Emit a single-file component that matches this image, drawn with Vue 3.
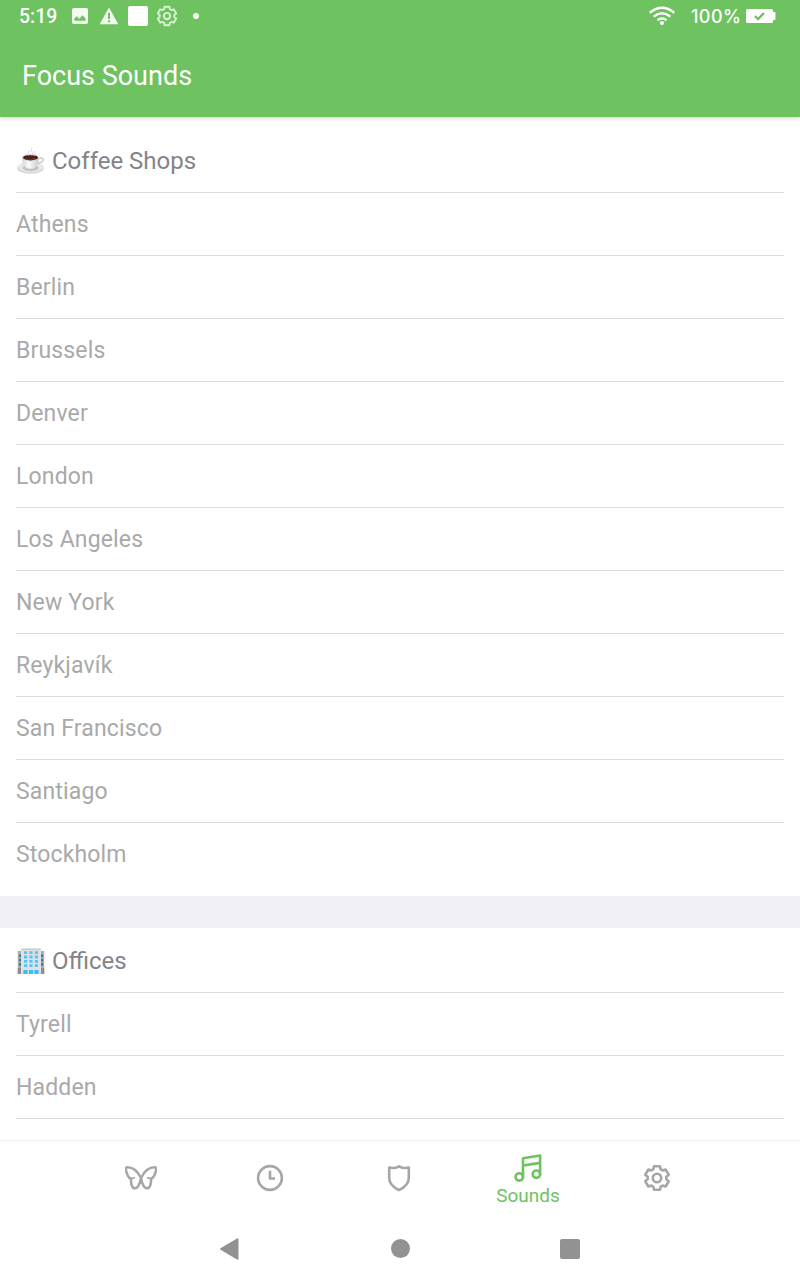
<script setup>
// 咖啡店列表
const coffeeShops = [
  'Athens',
  'Berlin',
  'Brussels',
  'Denver',
  'London',
  'Los Angeles',
  'New York',
  'Reykjavík',
  'San Francisco',
  'Santiago',
  'Stockholm',
]

// 办公室列表
const offices = ['Tyrell', 'Hadden']

// 齿轮轮廓, 状态栏和底部导航共用
const gear = 'M13 4.200H19L19.600 7.200Q20.600 7.500 21.600 8.500L24.600 7.500 27.700 12.700 25.300 14.800V17.200L27.700 19.300 24.600 24.500 21.600 23.500Q20.600 24.500 19.600 24.800L19 27.800H13L12.400 24.800Q11.400 24.500 10.400 23.500L7.400 24.500 4.300 19.300 6.700 17.200V14.800L4.300 12.700 7.400 7.500 10.400 8.500Q11.400 7.500 12.400 7.200z'
</script>

<template>
  <div class="screen">
    <header class="header">
      <div class="status">
        <span class="time">5:19</span>
        <svg class="s-image" width="16" height="16" viewBox="0 0 16 16">
          <rect width="16" height="16" rx="2" fill="#fff" fill-opacity=".92" />
          <path d="M2.3 12.8V10.500l2.600-2.200 2.300 2.500 3.500-3.600 3 3.500v2.100z" fill="#6ec25f" />
        </svg>
        <svg class="s-warn" width="20" height="18" viewBox="0 0 20 18">
          <path d="M10 .5L19.300 17.200H.7z" fill="#fff" fill-opacity=".9" />
          <path d="M9 6h2v6H9zM9 13.200h2v2H9z" fill="#6ec25f" />
        </svg>
        <span class="s-square"></span>
        <svg class="s-gear" width="22" height="22" viewBox="2 2 28 28">
          <path :d="gear" />
          <circle cx="16" cy="16" r="4" />
        </svg>
        <span class="s-dot"></span>
        <div class="status-right">
          <svg class="s-wifi" width="28" height="20" viewBox="0 0 28 20">
            <path d="M1.800 6.700Q14-3.300 26.200 6.700M5.600 10.600Q14 3.900 22.400 10.600M9.500 14.300Q14 10.800 18.500 14.300" />
            <circle cx="14" cy="17" r="2" />
          </svg>
          <span class="percent">100%</span>
          <svg width="30" height="14" viewBox="0 0 30 14">
            <path d="M1.500 0h24q1.500 0 1.500 1.500V3h1.300q1.200 0 1.200 1.200v5.600q0 1.200-1.200 1.200H27v1.500q0 1.500-1.500 1.500h-24Q0 14 0 12.500v-11Q0 0 1.500 0z" fill="#fff" />
            <path d="M9 7l3 3 6-6" fill="none" stroke="#6ec25f" stroke-width="2.300" />
          </svg>
        </div>
      </div>
      <h1 class="title">Focus Sounds</h1>
    </header>

    <main class="content">
      <section class="group group-first">
        <h2 class="group-title">
          <!-- 咖啡杯 -->
          <svg class="emoji" width="28" height="28" viewBox="0 0 28 28">
            <defs>
              <linearGradient id="cup" x1="0" x2="1">
                <stop offset="0" stop-color="#d2d2d2" />
                <stop offset=".4" stop-color="#fafafa" />
                <stop offset="1" stop-color="#c9c9c9" />
              </linearGradient>
            </defs>
            <ellipse cx="13.500" cy="20.900" rx="13.200" ry="5.900" fill="#cfcfcf" />
            <ellipse cx="13.500" cy="20.200" rx="12.600" ry="5.200" fill="#e8e8e8" />
            <ellipse cx="13.500" cy="21" rx="8" ry="3.200" fill="#c4c4c4" />
            <path d="M22 11.500q4.300-1.300 4.200 1.300-.2 3.200-5.700 3.600" fill="none" stroke="#cacaca" stroke-width="1.500" />
            <path d="M5 10.500c0 6.500 2.500 11.300 8.500 11.300S22 17 22 10.500z" fill="url(#cup)" />
            <ellipse cx="13.500" cy="10.500" rx="8.500" ry="3.400" fill="#dedad8" />
            <ellipse cx="13.500" cy="10.700" rx="7.500" ry="2.700" fill="#48211a" />
            <path d="M9 11.600q4.500 1.500 9-.2" fill="none" stroke="#74402f" />
            <path d="M12 9C9 6 13.500 5 11.500 3M14.500 9c3-3-1.500-4 .5-8M17 9c2-2-.5-3 .3-5" fill="none" stroke="#d8c9c8" stroke-opacity=".75" />
          </svg>
          <span>Coffee Shops</span>
        </h2>
        <ul class="list">
          <li v-for="name in coffeeShops" :key="name" class="item">{{ name }}</li>
        </ul>
      </section>

      <section class="group">
        <h2 class="group-title">
          <!-- 办公楼 -->
          <svg class="emoji" width="28" height="28" viewBox="0 0 28 28">
            <path d="M.8 4H5v23H.8zM23 4h4.200v23H23z" fill="#adadad" />
            <path d="M.8 21H5v6H.8zM23 21h4.200v6H23z" fill="#8c8c8c" />
            <path d="M4 2.500L5 1h18l1 1.500V27H4z" fill="#e1e1e1" />
            <path d="M4 2.500h20" stroke="#cbcbcb" />
            <path d="M3 7.500v13M25 7.500v13" stroke="#29789d" stroke-width="1.800" stroke-dasharray="2.600 1.700" />
            <path d="M7 5.600h14M7 10h14M7 14.300h14M7 18.600h14" stroke="#56c4f8" stroke-width="2.800" stroke-dasharray="3.200 2.200" />
            <path d="M6.400 23h4.200v4H6.400zM11.900 23h4.200v4h-4.200zM17.400 23h4.200v4h-4.200z" fill="#3cbcf5" />
          </svg>
          <span>Offices</span>
        </h2>
        <ul class="list">
          <li v-for="name in offices" :key="name" class="item item-line">{{ name }}</li>
        </ul>
      </section>
    </main>

    <!-- 底部导航 -->
    <nav class="tabs">
      <a class="tab">
        <svg width="32" height="28" viewBox="0.500 0 33 28" preserveAspectRatio="none">
          <path d="M17 14C13 6 7.500 3.300 2.800 3.300 0 3.300 2 8.500 3.300 11.500c.8 2 1.700 2.700 3.300 3-.2 5.500 1.200 9.800 4 9.800 3 0 5.200-4 6.400-10.300 1.200 6.300 3.400 10.300 6.400 10.300 2.800 0 4.200-4.300 4-9.800 1.600-.3 2.500-1 3.300-3 1.300-3 3.300-8.200.5-8.200C26.500 3.300 21 6 17 14z" />
          <path d="M5.500 14.400q3 .4 5.200-.8M28.500 14.400q-3 .4-5.200-.8" stroke-width="1.700" />
        </svg>
      </a>
      <a class="tab">
        <svg width="28" height="28" viewBox="0 0 28 28">
          <circle cx="14" cy="14" r="11.900" />
          <path d="M14 6.700v7.800h5" />
        </svg>
      </a>
      <a class="tab">
        <svg width="28" height="28" viewBox="0 0 28 28">
          <path d="M14 2.300Q9.600 4.800 4.200 3.600V14c0 5.800 4 9.300 9.800 12 5.800-2.700 9.800-6.200 9.800-12V3.600Q18.400 4.800 14 2.300z" />
        </svg>
      </a>
      <a class="tab tab-active">
        <svg width="28" height="28" viewBox="0 0 28 28">
          <circle cx="5.300" cy="22.900" r="3.700" />
          <circle cx="22.400" cy="20.200" r="3.700" />
          <path d="M9 22.900V4.200L26.100 1.500v18.700M9 11.500l17.100-2.600" />
        </svg>
        <span>Sounds</span>
      </a>
      <a class="tab">
        <svg width="30" height="30" viewBox="1 1 30 30">
          <path :d="gear" />
          <circle cx="16" cy="16" r="4.200" />
        </svg>
      </a>
    </nav>

    <!-- 系统按键 -->
    <div class="system">
      <svg width="22" height="24" viewBox="0 0 22 24">
        <path d="M2 12L18.500 2.300v19.400z" fill="#929292" stroke="#929292" stroke-width="2" stroke-linejoin="round" />
      </svg>
      <span class="home"></span>
      <span class="recent"></span>
    </div>
  </div>
</template>

<style>
body {
  margin: 0;
  background: #fff;
}
</style>

<style scoped>
.screen {
  display: flex;
  flex-direction: column;
  width: 800px;
  height: 1280px;
  overflow: hidden;
  background: #fff;
  font-family: Roboto, "Noto Sans", sans-serif;
}

.header {
  flex: none;
  height: 117px;
  background: #6ec25f;
  color: #fff;
  box-shadow: 0 1px 4px rgba(0, 0, 0, .2);
  z-index: 1;
}

.status {
  display: flex;
  align-items: center;
  height: 32px;
  padding: 0 24px 0 19px;
}

.time {
  width: 53px;
  font-size: 19.5px;
  font-weight: 500;
}

.s-warn {
  margin-left: 11px;
}

.s-square {
  width: 20px;
  height: 20px;
  margin-left: 9px;
  border-radius: 2px;
  background: #fff;
}

.s-gear {
  margin-left: 8px;
  fill: none;
  stroke: #fff;
  stroke-opacity: .75;
  stroke-width: 2.500;
  stroke-linejoin: round;
}

.s-dot {
  width: 6px;
  height: 6px;
  margin-left: 15px;
  border-radius: 50%;
  background: #fff;
}

.status-right {
  display: flex;
  align-items: center;
  margin-left: auto;
}

.s-wifi {
  fill: none;
  stroke: #fff;
  stroke-width: 2.400;
}

.s-wifi circle {
  fill: #fff;
  stroke: none;
}

.percent {
  width: 55px;
  margin-left: 15px;
  padding-top: 1px;
  font-family: Inter, Roboto, sans-serif;
  font-size: 18px;
  font-weight: 500;
  line-height: 22px;
  letter-spacing: .4px;
}

.title {
  margin: 0;
  padding: 27px 22px 0;
  font-size: 27px;
  font-weight: 400;
  line-height: 34px;
}

.content {
  flex: 1;
  min-height: 0;
  overflow: hidden;
}

.group {
  padding: 0 16px;
}

.group-first {
  padding-top: 11px;
  padding-bottom: 10px;
  border-bottom: 32px solid #f0f0f6;
}

.group-title {
  display: flex;
  align-items: center;
  gap: 7px;
  box-sizing: border-box;
  height: 65px;
  margin: 0;
  padding-top: 2px;
  border-bottom: 1px solid #dcdcdc;
  color: #848488;
  font-size: 24px;
  font-weight: 400;
}

.emoji {
  margin-left: 1px;
}

.list {
  margin: 0;
  padding: 0;
  list-style: none;
}

.item {
  box-sizing: border-box;
  height: 63px;
  border-bottom: 1px solid #dcdcdc;
  color: #a9a9a9;
  font-size: 23px;
  line-height: 64px;
  letter-spacing: .15px;
}

/* 第一组最后一行没有分割线 */
.item:last-child:not(.item-line) {
  border-bottom-color: transparent;
}

.tabs {
  display: flex;
  flex: none;
  justify-content: center;
  box-sizing: border-box;
  height: 77px;
  padding-right: 2px;
  border-top: 1px solid #f2f2f2;
}

.tab {
  display: flex;
  flex-direction: column;
  align-items: center;
  justify-content: center;
  width: 129px;
  height: 74px;
  color: #a6a6a8;
}

.tab svg {
  fill: none;
  stroke: currentColor;
  stroke-width: 2.600;
  stroke-linejoin: round;
}

.tab-active {
  box-sizing: border-box;
  padding-top: 8px;
  color: #6ec25f;
  font-size: 19px;
  line-height: 28px;
}

.system {
  display: flex;
  flex: none;
  align-items: center;
  box-sizing: border-box;
  height: 63px;
  padding-left: 219px;
}

.home {
  width: 19px;
  height: 19px;
  margin-left: 150px;
  border-radius: 50%;
  background: #929292;
}

.recent {
  width: 20px;
  height: 20px;
  margin-left: 150px;
  border-radius: 2px;
  background: #929292;
}
</style>
